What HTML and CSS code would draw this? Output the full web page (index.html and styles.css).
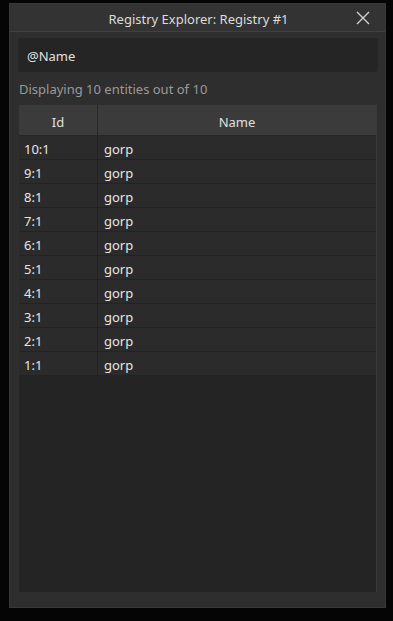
FILE: index.html
```html
<!DOCTYPE html>
<html>
<head>
<meta charset="utf-8">
<link rel="stylesheet" href="styles.css">
</head>
<body>
<div class="window">
  <div class="titlebar">
    <span class="title">Registry Explorer: Registry #1</span>
    <svg class="close" width="14" height="14" viewBox="0 0 14 14"><path d="M1 1 L13 13 M13 1 L1 13" stroke="#d0d0d0" stroke-width="1.4" fill="none"/></svg>
  </div>
  <div class="content">
    <div class="search">@Name</div>
    <div class="status">Displaying 10 entities out of 10</div>
    <div class="table">
      <div class="row head"><div class="c1">Id</div><div class="c2">Name</div></div>
      <div class="row"><div class="c1">10:1</div><div class="c2">gorp</div></div>
      <div class="row"><div class="c1">9:1</div><div class="c2">gorp</div></div>
      <div class="row"><div class="c1">8:1</div><div class="c2">gorp</div></div>
      <div class="row"><div class="c1">7:1</div><div class="c2">gorp</div></div>
      <div class="row"><div class="c1">6:1</div><div class="c2">gorp</div></div>
      <div class="row"><div class="c1">5:1</div><div class="c2">gorp</div></div>
      <div class="row"><div class="c1">4:1</div><div class="c2">gorp</div></div>
      <div class="row"><div class="c1">3:1</div><div class="c2">gorp</div></div>
      <div class="row"><div class="c1">2:1</div><div class="c2">gorp</div></div>
      <div class="row"><div class="c1">1:1</div><div class="c2">gorp</div></div>
    </div>
  </div>
</div>
</body>
</html>
```
FILE: styles.css
```css
html, body { margin: 0; padding: 0; background: #050505; }
body { width: 393px; height: 621px; overflow: hidden; font-family: "Noto Sans", sans-serif; font-size: 13px; }
.window {
  margin: 3px 0 0 9px;
  width: 377px;
  height: 605px;
  background: #2e2e2e;
  box-sizing: border-box;
  border: 1px solid #383838;
  display: flex;
  flex-direction: column;
}
.titlebar {
  height: 27px;
  background: #333333;
  border-bottom: 1px solid #404040;
  display: flex;
  align-items: center;
  justify-content: center;
  position: relative;
  color: #dcdcdc;
}
.title { line-height: 27px; margin-left: 2px; padding-top: 3px; }
.close { position: absolute; right: 15px; top: 7px; }
.content {
  flex: 1;
  display: flex;
  flex-direction: column;
  padding: 6px 7px 14px 8px;
}
.search {
  height: 34px;
  background: #252525;
  border-radius: 3px;
  color: #e0e0e0;
  padding-left: 9px;
  line-height: 37px;
}
.status {
  color: #9a9a9a;
  height: 32px;
  line-height: 34px;
  padding-left: 1px;
}
.table {
  flex: 1;
  background: #242424;
  border: 1px solid #2f2f2f;
  border-right: 1px solid #3a3a3a;
  margin-right: 1px;
}
.row {
  display: flex;
  height: 23px;
  border-bottom: 1px solid #232323;
  background: #2b2b2b;
  color: #e6e6e6;
  line-height: 27px;
}
.row.head {
  height: 30px;
  line-height: 35px;
  background: #3b3b3b;
  border-bottom: 1px solid #262626;
  color: #e0e0e0;
}
.c1 { width: 73px; padding-left: 5px; border-right: 1px solid #232323; overflow: hidden; }
.c2 { flex: 1; padding-left: 6px; overflow: hidden; }
.head .c1, .head .c2 { text-align: center; padding-left: 0; }
.head .c1 { width: 78px; border-right-color: #2a2a2a; }
```
